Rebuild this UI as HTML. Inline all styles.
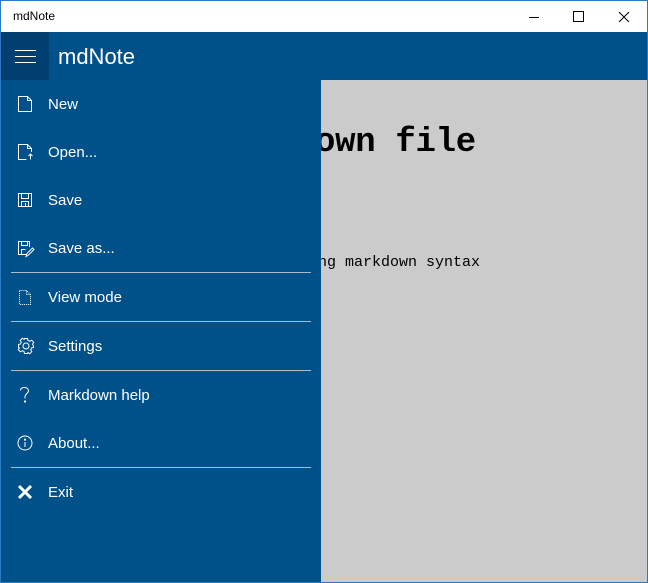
<!DOCTYPE html>
<html><head><meta charset="utf-8"><style>
*{margin:0;padding:0;box-sizing:border-box}
body{width:648px;height:583px;overflow:hidden;background:#2b79c2;position:relative;font-family:"Liberation Sans",sans-serif}
.title{position:absolute;left:1px;top:1px;width:646px;height:31px;background:#fff}
.title .t{position:absolute;left:12px;top:8px;font-size:12px;color:#000}
.appbar{position:absolute;left:1px;top:32px;width:646px;height:48px;background:#00508a}
.ham{position:absolute;left:1px;top:32px;width:48px;height:48px;background:#003f70}
.ham i{position:absolute;left:14px;width:21px;height:1px;background:#fff}
.apptitle{position:absolute;left:58px;top:44px;font-size:22px;color:#fff}
.content{position:absolute;left:321px;top:80px;width:326px;height:502px;background:#cbcbcb}
.mono{position:absolute;font-family:"Liberation Mono",monospace;color:#000;white-space:nowrap}
.pane{position:absolute;left:1px;top:80px;width:320px;height:502px;background:#00508a}
.item{position:absolute;left:48px;font-size:15px;color:#fff}
.sep{position:absolute;left:11px;width:300px;height:1px;background:#a9bccc}
svg{position:absolute}
</style></head><body>
<div class="title"><span class="t">mdNote</span>
<svg style="left:528px;top:8px" width="110" height="16" viewBox="0 0 110 16" fill="none" stroke="#000" stroke-width="1">
<path d="M0 8.5H10"/><rect x="44.5" y="2.5" width="10" height="10"/><path d="M90 3L100 13M100 3L90 13"/></svg>
</div>
<div class="appbar"></div>
<div class="ham"><i style="top:18px"></i><i style="top:24px"></i><i style="top:30px"></i></div>
<div class="apptitle">mdNote</div>
<div class="content"></div>
<div class="mono" style="left:315px;top:124px;font-size:34px;font-weight:bold;letter-spacing:-0.3px">own file</div>
<div class="mono" style="left:318px;top:254px;font-size:15px">ng markdown syntax</div>
<div class="pane"></div>

<svg style="left:17px;top:95px" width="16" height="18" fill="none" stroke="#fff" stroke-width="1"><path d="M1.5 1.5H10.5L14.5 5.5V16.5H1.5Z M10.5 1.5V5.5H14.5"/></svg>
<div class="item" style="top:96px">New</div>
<svg style="left:17px;top:143px" width="17" height="18" fill="none" stroke="#fff" stroke-width="1"><path d="M9.5 16.5H1.5V1.5H10.5L14.5 5.5V9 M10.5 1.5V5.5H14.5 M13.5 16.5V11 M11.5 13L13.5 11L15.5 13"/></svg>
<div class="item" style="top:144px">Open...</div>
<svg style="left:17px;top:192px" width="17" height="17" fill="none" stroke="#fff" stroke-width="1"><path d="M1.5 1.5H14.5V14.5H1.5Z M4.5 1.5V6.5H11.5V1.5 M4.5 14.5V9.5H11.5V14.5 M8.5 11V14"/></svg>
<div class="item" style="top:192px">Save</div>
<svg style="left:17px;top:240px" width="18" height="18" fill="none" stroke="#fff" stroke-width="1"><path d="M9.5 14.5H1.5V1.5H12.5V7 M4.5 1.5V5.5H10.5V1.5 M4.5 14.5V9.5H8.5 M9 16.5L10 13.5L15.5 8L17 9.5L11.5 15Z"/></svg>
<div class="item" style="top:240px">Save as...</div>
<div class="sep" style="top:272px"></div>
<svg style="left:17px;top:289px" width="16" height="17" fill="none" stroke="#fff" stroke-width="1" stroke-dasharray="1 1"><path d="M2.5 1.5H9.5L13.5 5.5V15.5H2.5Z M9.5 1.5V5.5H13.5"/></svg>
<div class="item" style="top:289px">View mode</div>
<div class="sep" style="top:321px"></div>
<svg style="left:17px;top:337px" width="18" height="18" viewBox="0 0 18 18" fill="none" stroke="#fff" stroke-width="1"><circle cx="9" cy="9" r="3"/><path d="M7.5 1.5H10.5L11 3.5L12.8 4.3L14.6 3.2L16.7 5.3L15.6 7.1L16.4 8.9L16.5 9.2V10.5L14.5 11L13.7 12.8L14.8 14.6L12.7 16.7L10.9 15.6L10.5 16.5H7.5L7 14.5L5.2 13.7L3.4 14.8L1.3 12.7L2.4 10.9L1.5 10.5V7.5L3.5 7L4.3 5.2L3.2 3.4L5.3 1.3L7.1 2.4Z"/></svg>
<div class="item" style="top:338px">Settings</div>
<div class="sep" style="top:370px"></div>
<svg style="left:19px;top:386px" width="12" height="18" fill="none" stroke="#fff" stroke-width="1"><path d="M1.5 4.5C1.5 2.5 3 1.5 5.5 1.5S9.5 3 9.5 5S6 8 6 11V12.5"/><circle cx="6" cy="15.5" r="0.6" fill="#fff"/></svg>
<div class="item" style="top:387px">Markdown help</div>
<svg style="left:17px;top:435px" width="17" height="17" fill="none" stroke="#fff" stroke-width="1"><circle cx="8" cy="8" r="7"/><path d="M8 7V12"/><circle cx="8" cy="4.6" r="0.6" fill="#fff"/></svg>
<div class="item" style="top:435px">About...</div>
<div class="sep" style="top:467px"></div>
<svg style="left:17px;top:484px" width="16" height="16" fill="none" stroke="#fff" stroke-width="3"><path d="M2 2L14 14M14 2L2 14"/></svg>
<div class="item" style="top:484px">Exit</div>
</body></html>
